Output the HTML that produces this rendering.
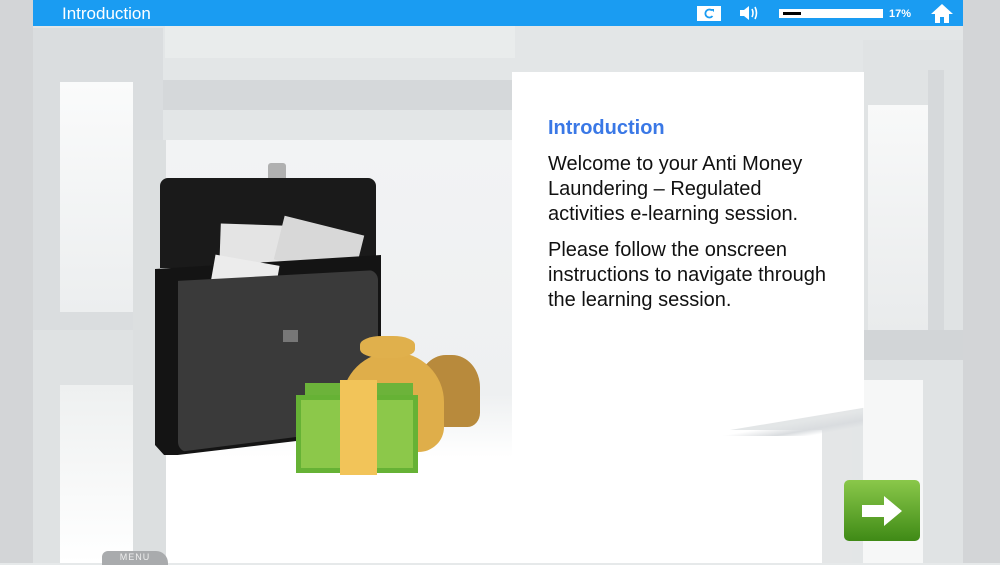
<!DOCTYPE html>
<html><head><style>
*{margin:0;padding:0;box-sizing:border-box}
body{width:1000px;height:563px;overflow:hidden;position:relative;background:#e6e9ea;font-family:"Liberation Sans",Arial,sans-serif}
.a{position:absolute}
</style></head><body>
<div class="a" style="left:0;top:0;width:33px;height:563px;background:#d3d5d7"></div>
<div class="a" style="left:963px;top:0;width:37px;height:563px;background:#d3d5d7"></div>
<div class="a" style="left:33px;top:26px;width:930px;height:537px;background:#e3e6e7"></div>
<div class="a" style="left:165px;top:26px;width:350px;height:32px;background:#e9ecec"></div>
<div class="a" style="left:160px;top:80px;width:352px;height:30px;background:#d5d8da"></div>
<div class="a" style="left:33px;top:28px;width:130px;height:330px;background:#dadddf"></div>
<div class="a" style="left:60px;top:82px;width:73px;height:230px;background:linear-gradient(#fafbfb,#eceeef)"></div>
<div class="a" style="left:33px;top:330px;width:132px;height:233px;background:#dfe2e3"></div>
<div class="a" style="left:60px;top:385px;width:73px;height:178px;background:linear-gradient(#eef0f0,#fff)"></div>
<div class="a" style="left:133px;top:140px;width:33px;height:423px;background:#dcdfe0"></div>
<div class="a" style="left:166px;top:140px;width:346px;height:423px;background:linear-gradient(#f2f3f4 0%,#eef0f1 60%,#fff 75%,#fff 100%)"></div>
<div class="a" style="left:863px;top:40px;width:100px;height:523px;background:#e0e3e4"></div>
<div class="a" style="left:868px;top:105px;width:60px;height:225px;background:linear-gradient(#f8f9f9,#e9ebec)"></div>
<div class="a" style="left:928px;top:70px;width:16px;height:260px;background:#d6d9db"></div>
<div class="a" style="left:863px;top:330px;width:100px;height:30px;background:#d2d5d7"></div>
<div class="a" style="left:863px;top:380px;width:60px;height:183px;background:#f6f7f7"></div>
<div class="a" style="left:512px;top:430px;width:310px;height:133px;background:#fff"></div>
<div class="a" style="left:822px;top:410px;width:30px;height:153px;background:#e4e6e7"></div>
<div class="a" style="left:33px;top:0;width:930px;height:26px;background:#1a9cf2"></div>
<div class="a" style="left:62px;top:4px;color:#fff;font-size:17px">Introduction</div>
<div class="a" style="left:697px;top:6px;width:24px;height:15px;background:#fff"></div>
<svg class="a" style="left:697px;top:6px" width="24" height="15" viewBox="0 0 24 15"><path d="M15 4.5A4 4 0 1 0 15.5 10" stroke="#1a9cf2" stroke-width="1.8" fill="none"/><path d="M13 3h4v3z" fill="#1a9cf2"/></svg>
<svg class="a" style="left:738px;top:4px" width="24" height="18" viewBox="0 0 24 18"><path d="M2 6h4l5-4v14l-5-4H2z" fill="#fff"/><path d="M14 5q2 4 0 8M17 3q3 6 0 12" stroke="#fff" stroke-width="1.6" fill="none"/></svg>
<div class="a" style="left:779px;top:9px;width:104px;height:9px;background:#fff"></div>
<div class="a" style="left:783px;top:12px;width:18px;height:3px;background:#000"></div>
<div class="a" style="left:889px;top:8px;color:#fff;font-size:11px;font-weight:bold">17%</div>
<svg class="a" style="left:930px;top:3px" width="24" height="21" viewBox="0 0 24 21"><path d="M12 1L1 11h4v9h5v-6h4v6h5v-9h4z" fill="#fff"/></svg>
<div class="a" style="left:512px;top:72px;width:352px;height:365px;background:#fff;clip-path:polygon(0 0,100% 0,100% 92%,50% 100%,0 100%)"></div>
<div class="a" style="left:688px;top:404px;width:175px;height:32px;background:linear-gradient(170deg,transparent 60%,#d9dcdf 75%,transparent 85%)"></div>
<div class="a" style="left:548px;top:117px;color:#3a78e6;font-size:20px;font-weight:bold">Introduction</div>
<div class="a" style="left:548px;top:152px;width:285px;color:#111;font-size:20px;line-height:25px">Welcome to your Anti Money Laundering – Regulated activities e-learning session.</div>
<div class="a" style="left:548px;top:238px;width:300px;color:#111;font-size:20px;line-height:25px">Please follow the onscreen instructions to navigate through the learning session.</div>
<div class="a" style="left:268px;top:163px;width:18px;height:25px;background:#b0b0b0;border-radius:3px"></div>
<div class="a" style="left:160px;top:178px;width:216px;height:90px;background:#1a1a1a;border-radius:8px 8px 0 0"></div>
<div class="a" style="left:220px;top:225px;width:88px;height:45px;background:#e4e4e4;transform:rotate(2deg)"></div>
<div class="a" style="left:278px;top:225px;width:82px;height:45px;background:#d8d8d8;transform:rotate(14deg)"></div>
<div class="a" style="left:155px;top:255px;width:226px;height:200px;background:#141414;clip-path:polygon(0 7%,100% 0,100% 88%,10% 100%,4% 100%,0 95%)"></div>
<div class="a" style="left:212px;top:260px;width:65px;height:35px;background:#ececec;transform:rotate(10deg)"></div>
<div class="a" style="left:178px;top:270px;width:200px;height:182px;background:#3a3a3a;border-radius:10px;clip-path:polygon(0 6%,100% 0,100% 86%,0 100%)"></div>
<div class="a" style="left:283px;top:330px;width:15px;height:12px;background:#777"></div>
<div class="a" style="left:418px;top:355px;width:62px;height:72px;background:#b88a3c;border-radius:45% 45% 20% 20%"></div>
<div class="a" style="left:342px;top:352px;width:102px;height:100px;background:#dfae4a;border-radius:50% 50% 25% 25%"></div>
<div class="a" style="left:360px;top:336px;width:55px;height:22px;background:#e0b04c;border-radius:40%"></div>
<div class="a" style="left:305px;top:383px;width:108px;height:20px;background:#6cb33a"></div>
<div class="a" style="left:296px;top:395px;width:122px;height:78px;background:#8cc84a;border:5px solid #66b235"></div>
<div class="a" style="left:340px;top:380px;width:37px;height:95px;background:#f2c459"></div>
<div class="a" style="left:844px;top:480px;width:76px;height:61px;background:linear-gradient(#8ac84a,#3f8a16);border-radius:5px"></div>
<svg class="a" style="left:860px;top:494px" width="44" height="34" viewBox="0 0 44 34"><path d="M2 11h22V2l18 15-18 15v-9H2z" fill="#fff"/></svg>
<div class="a" style="left:102px;top:551px;width:66px;height:14px;background:#a9abad;border-radius:6px 12px 0 0;color:#eee;font-size:9px;text-align:center;line-height:13px;letter-spacing:1px">MENU</div>
</body></html>
